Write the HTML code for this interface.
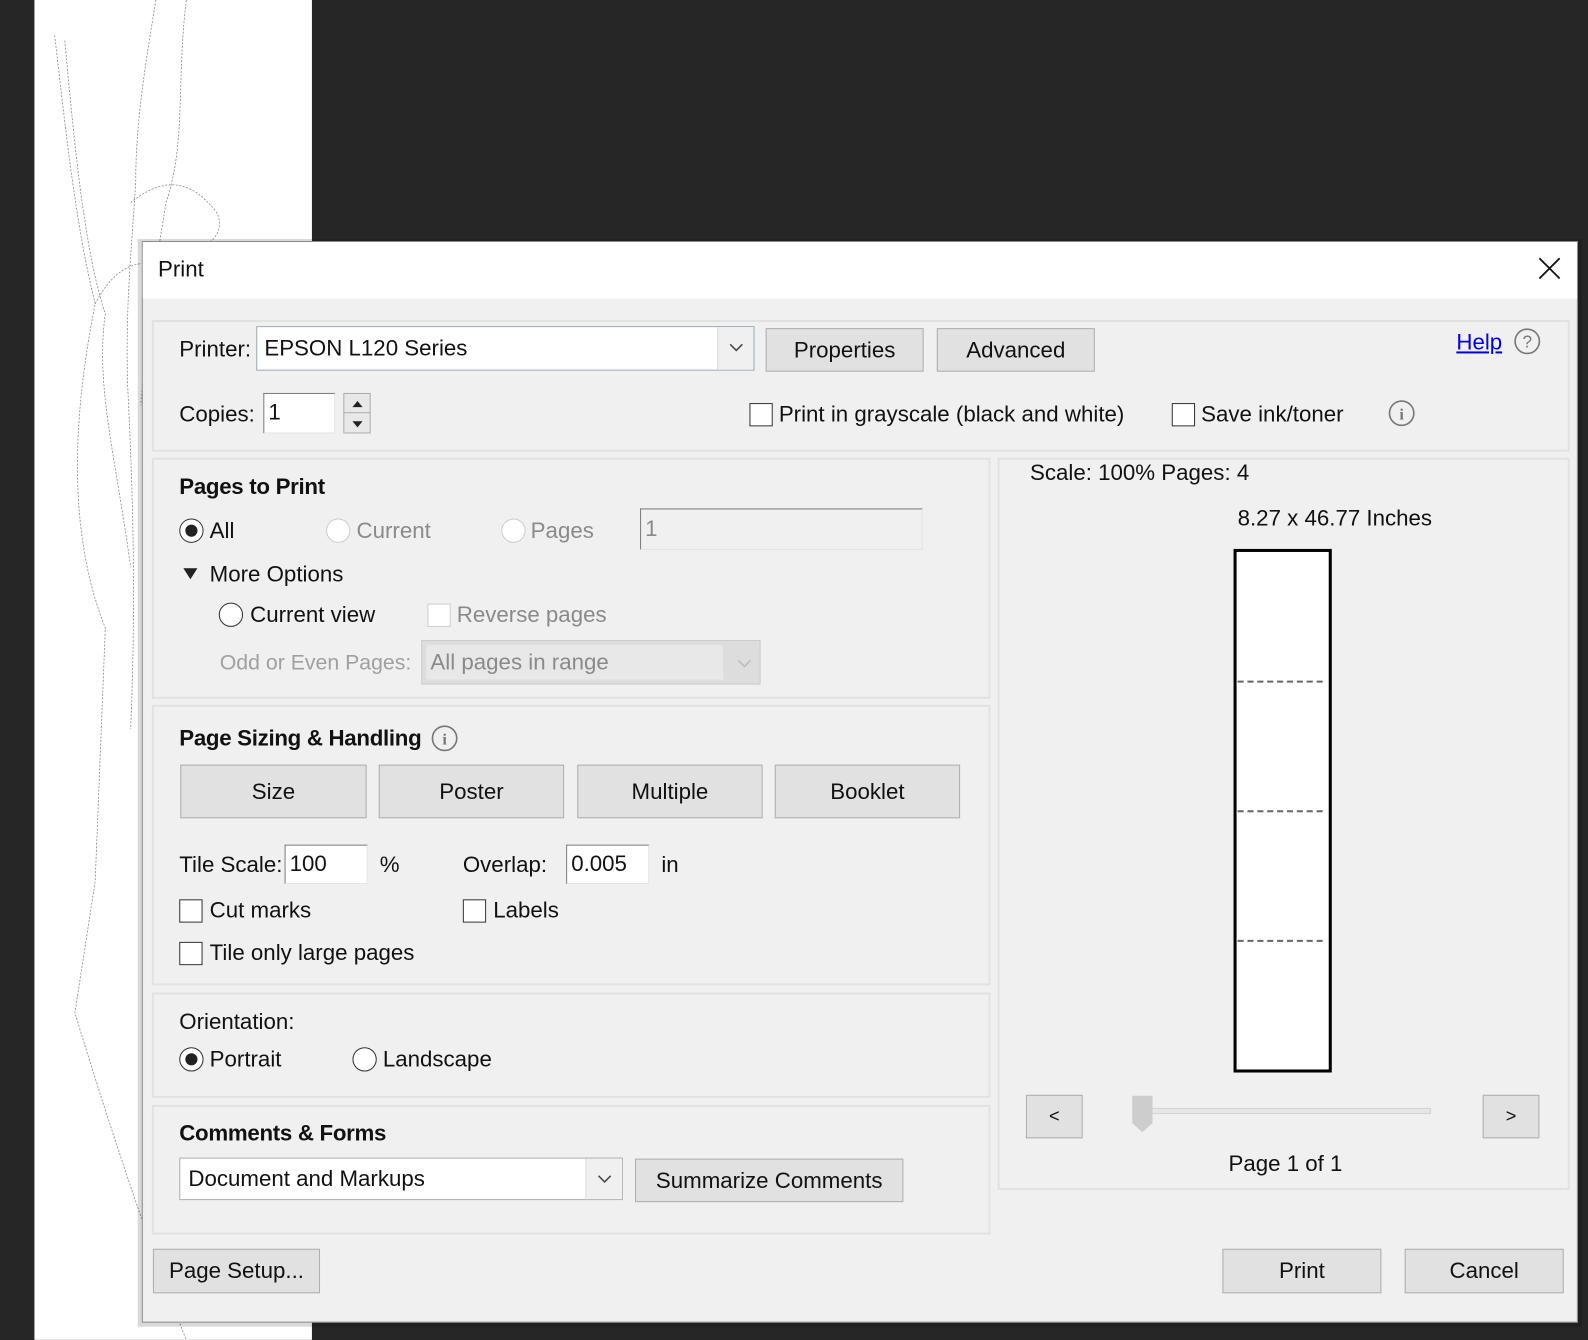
<!DOCTYPE html>
<html><head><meta charset="utf-8"><style>
*{margin:0;padding:0;box-sizing:border-box}
html,body{width:1588px;height:1340px;overflow:hidden;background:#262626}
#s{position:absolute;left:0;top:0;width:1568px;height:1323px;transform:scale(1.01276);transform-origin:0 0;font-family:"Liberation Sans",sans-serif;font-size:22px;color:#111;letter-spacing:0}
.a{position:absolute}
.t{position:absolute;height:26px;line-height:26px;white-space:nowrap}
.g{position:absolute;border:2px solid #e2e2e2}
.btn{position:absolute;background:#e1e1e1;border:1px solid #adadad;text-align:center;display:flex;align-items:center;justify-content:center}
.in{position:absolute;background:#fff;border:1px solid #7a7a7a;border-right-color:#e3e3e3;border-bottom-color:#e3e3e3;padding-left:4px;line-height:36px}
.cb{position:absolute;width:23px;height:23px;border:1.5px solid #333;background:#fff}
.rd{position:absolute;width:24px;height:24px;border:1.5px solid #333;border-radius:50%;background:#fff}
.rd.on::after{content:"";position:absolute;left:4.5px;top:4.5px;width:12px;height:12px;border-radius:50%;background:#222}
.dis{color:#8a8a8a}
.b{font-weight:bold;letter-spacing:-0.3px}
.sel{position:absolute;background:#fff;border:1px solid #acacac}
.chev{position:absolute;right:0;top:0;bottom:0;width:36px;background:#f0f0f0;border-left:1px solid #ddd}
</style></head><body><div id="s">
<div class="a" style="left:34px;top:0;width:274px;height:1323px;background:#fff"></div>
<svg class="a" style="left:34px;top:0" width="274" height="1323" fill="none" stroke="#888" stroke-width="0.8" stroke-dasharray="2 1.5">
<path d="M20 35 C30 120 40 220 60 300 C40 400 30 520 70 620 L60 870 L40 1000 C70 1100 120 1250 150 1323"/>
<path d="M30 40 C40 150 50 250 70 310 C60 380 80 450 95 560"/>
<path d="M120 0 C110 60 100 120 100 180 C95 260 90 300 92 380 C98 500 100 600 95 720"/>
<path d="M150 0 C140 80 150 140 130 200 C120 260 110 320 105 400"/>
<path d="M95 200 C120 180 150 170 180 210 C190 230 170 250 150 240"/>
<path d="M60 300 C80 260 110 250 140 270"/>
</svg>
<div class="a" style="left:136px;top:236px;width:1426px;height:1074px;background:rgba(0,0,0,0.15)"></div>
<div class="a" style="left:140px;top:238px;width:1418px;height:1068px;background:#f0f0f0;border:1px solid #888"></div>
<div class="a" style="left:141px;top:239px;width:1416px;height:56px;background:#fff"></div>
<div class="t" style="left:156px;top:253px">Print</div>
<svg class="a" style="left:1519px;top:254px" width="22" height="22" stroke="#111" stroke-width="1.8"><path d="M1 1L21 21M21 1L1 21"/></svg>

<div class="g" style="left:150px;top:316px;width:1400px;height:130px"></div>
<div class="t" style="left:177px;top:332px">Printer:</div>
<div class="sel" style="left:253px;top:322px;width:492px;height:44px;border-color:#9ab"><div class="t" style="left:7px;top:8px">EPSON L120 Series</div><div class="chev"><svg class="a" style="left:11px;top:16px" width="14" height="9" stroke="#444" stroke-width="1.5" fill="none"><path d="M1 1L7 7L13 1"/></svg></div></div>
<div class="btn" style="left:756px;top:324px;width:156px;height:43px">Properties</div>
<div class="btn" style="left:925px;top:324px;width:156px;height:43px">Advanced</div>
<div class="t" style="left:1438px;top:325px;color:#0000ee;text-decoration:underline">Help</div>
<svg class="a" style="left:1494px;top:323px" width="28" height="28"><circle cx="14" cy="14" r="12" fill="none" stroke="#777" stroke-width="1.6"/><text x="14" y="20" text-anchor="middle" font-size="17" fill="#777" font-family="Liberation Sans">?</text></svg>

<div class="t" style="left:177px;top:396px">Copies:</div>
<div class="in" style="left:260px;top:388px;width:71px;height:40px">1</div>
<div class="a" style="left:339px;top:388px;width:27px;height:40px;border:1px solid #adadad;background:#e8e8e8"></div>
<div class="a" style="left:339px;top:407px;width:27px;height:1px;background:#adadad"></div>
<svg class="a" style="left:346px;top:393px" width="14" height="32" fill="#222"><path d="M2 9L7 3L12 9Z"/><path d="M2 23L7 29L12 23Z"/></svg>
<div class="cb" style="left:740px;top:398px"></div>
<div class="t" style="left:769px;top:396px">Print in grayscale (black and white)</div>
<div class="cb" style="left:1157px;top:398px"></div>
<div class="t" style="left:1186px;top:396px">Save ink/toner</div>
<svg class="a" style="left:1370px;top:394px" width="28" height="28"><circle cx="14" cy="14" r="12" fill="none" stroke="#777" stroke-width="1.6"/><text x="14" y="20" text-anchor="middle" font-size="16" fill="#777" font-family="Liberation Serif" font-weight="bold">i</text></svg>

<div class="g" style="left:150px;top:452px;width:828px;height:238px"></div>
<div class="t b" style="left:177px;top:468px">Pages to Print</div>
<div class="rd on" style="left:177px;top:512px"></div><div class="t" style="left:207px;top:511px">All</div>
<div class="rd" style="left:322px;top:512px;border-color:#ccc"></div><div class="t dis" style="left:352px;top:511px">Current</div>
<div class="rd" style="left:495px;top:512px;border-color:#ccc"></div><div class="t dis" style="left:524px;top:511px">Pages</div>
<div class="in dis" style="left:632px;top:502px;width:279px;height:41px;background:#f0f0f0;line-height:38px">1</div>
<svg class="a" style="left:181px;top:561px" width="14" height="12" fill="#222"><path d="M0 0H14L7 11Z"/></svg>
<div class="t" style="left:207px;top:554px">More Options</div>
<div class="rd" style="left:216px;top:595px"></div><div class="t" style="left:247px;top:594px">Current view</div>
<div class="cb" style="left:422px;top:596px;border-color:#ccc"></div><div class="t dis" style="left:451px;top:594px">Reverse pages</div>
<div class="t" style="left:217px;top:642px;color:#a0a0a0;font-size:21px">Odd or Even Pages:</div>
<div class="a" style="left:416px;top:632px;width:335px;height:44px;background:#ddd;border:1px solid #ccc"><div class="a" style="left:4px;top:4px;width:293px;height:34px;background:#e8e8e8"></div><div class="t dis" style="left:8px;top:8px">All pages in range</div><svg class="a" style="left:311px;top:18px" width="14" height="9" stroke="#bbb" stroke-width="1.5" fill="none"><path d="M1 1L7 7L13 1"/></svg></div>

<div class="g" style="left:150px;top:696px;width:828px;height:277px"></div>
<div class="t b" style="left:177px;top:716px">Page Sizing &amp; Handling</div>
<svg class="a" style="left:425px;top:715px" width="28" height="28"><circle cx="14" cy="14" r="12" fill="none" stroke="#777" stroke-width="1.6"/><text x="14" y="20" text-anchor="middle" font-size="16" fill="#777" font-family="Liberation Serif" font-weight="bold">i</text></svg>
<div class="btn" style="left:178px;top:755px;width:184px;height:53px">Size</div>
<div class="btn" style="left:374px;top:755px;width:183px;height:53px">Poster</div>
<div class="btn" style="left:570px;top:755px;width:183px;height:53px">Multiple</div>
<div class="btn" style="left:765px;top:755px;width:183px;height:53px">Booklet</div>
<div class="t" style="left:177px;top:841px">Tile Scale:</div>
<div class="in" style="left:281px;top:834px;width:82px;height:39px">100</div>
<div class="t" style="left:375px;top:841px">%</div>
<div class="t" style="left:457px;top:841px">Overlap:</div>
<div class="in" style="left:559px;top:834px;width:82px;height:39px">0.005</div>
<div class="t" style="left:653px;top:841px">in</div>
<div class="cb" style="left:177px;top:888px"></div><div class="t" style="left:207px;top:886px">Cut marks</div>
<div class="cb" style="left:457px;top:888px"></div><div class="t" style="left:487px;top:886px">Labels</div>
<div class="cb" style="left:177px;top:930px"></div><div class="t" style="left:207px;top:928px">Tile only large pages</div>

<div class="g" style="left:150px;top:980px;width:828px;height:104px"></div>
<div class="t" style="left:177px;top:996px">Orientation:</div>
<div class="rd on" style="left:177px;top:1034px"></div><div class="t" style="left:207px;top:1033px">Portrait</div>
<div class="rd" style="left:348px;top:1034px"></div><div class="t" style="left:378px;top:1033px">Landscape</div>

<div class="g" style="left:150px;top:1091px;width:828px;height:128px"></div>
<div class="t b" style="left:177px;top:1106px">Comments &amp; Forms</div>
<div class="sel" style="left:177px;top:1143px;width:438px;height:42px"><div class="t" style="left:8px;top:7px">Document and Markups</div><div class="chev"><svg class="a" style="left:11px;top:16px" width="14" height="9" stroke="#444" stroke-width="1.5" fill="none"><path d="M1 1L7 7L13 1"/></svg></div></div>
<div class="btn" style="left:627px;top:1144px;width:265px;height:43px">Summarize Comments</div>

<div class="g" style="left:985px;top:452px;width:565px;height:723px"></div>
<div class="t" style="left:1017px;top:454px">Scale: 100% Pages: 4</div>
<div class="t" style="left:1222px;top:499px">8.27 x 46.77 Inches</div>
<div class="a" style="left:1218px;top:542px;width:97px;height:517px;background:#fff;border:3px solid #000"></div>
<div class="a" style="left:1222px;top:672px;width:84px;border-top:2px dashed #666"></div>
<div class="a" style="left:1222px;top:800px;width:84px;border-top:2px dashed #666"></div>
<div class="a" style="left:1222px;top:928px;width:84px;border-top:2px dashed #666"></div>
<div class="btn" style="left:1013px;top:1081px;width:56px;height:43px;font-size:18px">&lt;</div>
<div class="btn" style="left:1464px;top:1081px;width:56px;height:43px;font-size:18px">&gt;</div>
<div class="a" style="left:1128px;top:1094px;width:285px;height:6px;background:#e6e6e6;border:1px solid #d4d4d4"></div>
<svg class="a" style="left:1117px;top:1081px" width="22" height="38"><path d="M1 1H21V28L11 37L1 28Z" fill="#cdcdcd"/></svg>
<div class="t" style="left:1213px;top:1136px">Page 1 of 1</div>

<div class="btn" style="left:151px;top:1233px;width:165px;height:44px">Page Setup...</div>
<div class="btn" style="left:1207px;top:1233px;width:157px;height:44px">Print</div>
<div class="btn" style="left:1387px;top:1233px;width:157px;height:44px">Cancel</div>
</div></body></html>
